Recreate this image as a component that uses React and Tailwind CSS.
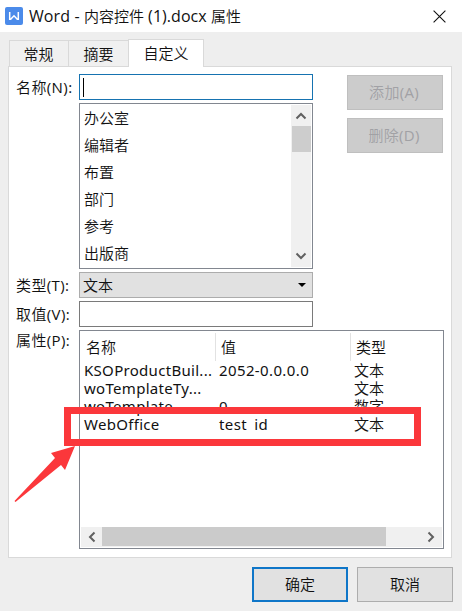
import { useState } from 'react';

const PRESETS = ['办公室', '编辑者', '布置', '部门', '参考', '出版商'];

const PROPERTIES = [
  { name: 'KSOProductBuil...', value: '2052-0.0.0.0', type: '文本' },
  { name: 'woTemplateTy...', value: '', type: '文本' },
  { name: 'woTemplate', value: '0', type: '数字' },
  { name: 'WebOffice', value: 'test id', type: '文本' },
];

const TABS = [
  { label: '常规', className: 'w-[59px] pr-px' },
  { label: '摘要', className: 'w-[60px]' },
];

const Chevron = ({ d, className }) => (
  <svg viewBox="0 0 12 12" className={className} fill="none" stroke="#606060" strokeWidth="2">
    <path d={d} />
  </svg>
);

const Label = ({ children, className = '' }) => (
  <span className={`w-[62px] shrink-0 tracking-[0.4px] mr-px ${className}`}>{children}</span>
);

const App = () => {
  const [name, setName] = useState('');

  return (
    <div className="relative flex h-[611px] w-[462px] flex-col overflow-hidden bg-[#eeeeee] font-['Open_Sans','Noto_Sans_CJK_SC_DemiLight','Noto_Sans_CJK_SC',sans-serif] text-[15px] leading-[20px] text-[#111]">
      {/* Title bar */}
      <header className="flex h-8 shrink-0 items-center bg-white pl-[5px] pr-[16px]">
        <svg viewBox="0 0 18 18" className="h-[18px] w-[18px]">
          <rect width="18" height="18" rx="2" fill="#4b8bea" />
          <path d="M4.7 5v7.2h1L9 8.8l3.3 3.4h1V5" fill="none" stroke="#fff" strokeWidth="1.5" />
        </svg>
        <h1 className="ml-[6px] whitespace-pre">
          <span className="text-[16px] tracking-[0.1px]">Word - </span>内容控件
          <span className="text-[16px] tracking-[0.05px]"> (1).docx </span>属性
        </h1>
        <svg viewBox="0 0 13 13" className="ml-auto h-[13px] w-[13px]" stroke="#111" strokeWidth="1.1">
          <path d="M.6.6l11.8 11.8M12.4.6L.6 12.4" />
        </svg>
      </header>

      {/* Tabs */}
      <nav className="z-10 flex h-[35px] shrink-0 items-end pl-[9px]">
        {TABS.map((tab) => (
          <button
            key={tab.label}
            className={`mb-px h-[26px] border-l border-t border-[#d9d9d9] bg-[#f0f0f0] ${tab.className}`}
          >
            {tab.label}
          </button>
        ))}
        <button className="h-[28px] w-[76px] border border-b-0 border-[#d9d9d9] bg-white pb-px">
          自定义
        </button>
      </nav>

      {/* Custom properties panel */}
      <main className="-mt-px ml-[8px] flex h-[492px] w-[444px] shrink-0 flex-col gap-[3px] border border-[#d9d9d9] bg-white pl-[7px] pt-[7px]">
        <div className="flex">
          <div className="flex flex-col gap-[3px]">
            <div className="flex h-[26px] items-center">
              <Label>名称(N):</Label>
              <div className="relative">
                <input
                  value={name}
                  onChange={(e) => setName(e.target.value)}
                  className="block h-[26px] w-[234px] border border-[#1673b1] bg-white px-1 outline-none"
                />
                <span className="absolute left-[4px] top-[4px] h-[19px] w-px bg-black" />
              </div>
            </div>

            <div className="ml-[63px] flex h-[166px] w-[234px] border border-[#828790] p-px">
              <ul className="flex-1 pl-[3px]">
                {PRESETS.map((item) => (
                  <li key={item} className="h-[27px] pt-[3px]">
                    {item}
                  </li>
                ))}
              </ul>
              <div className="flex w-[20px] flex-col items-center bg-[#f0f0f0]">
                <div className="flex h-[21px] items-center">
                  <Chevron d="M1.5 8.5L6 4l4.5 4.5" className="h-[12px] w-[12px]" />
                </div>
                <div className="h-[26px] w-[19px] bg-[#cdcdcd]" />
                <div className="mt-auto flex h-[22px] items-center">
                  <Chevron d="M1.5 3.5L6 8l4.5-4.5" className="h-[12px] w-[12px]" />
                </div>
              </div>
            </div>
          </div>

          <div className="ml-[34px] mt-px flex flex-col gap-[8px] tracking-[0.3px] text-[#a1a1a5]">
            <button className="h-[35px] w-[96px] border border-[#bfbfbf] bg-[#cccccc] pb-[2px] pr-[2px]">添加(A)</button>
            <button className="h-[35px] w-[96px] border border-[#bfbfbf] bg-[#cccccc] pb-[2px] pr-[2px]">删除(D)</button>
          </div>
        </div>

        <div className="flex h-[26px] items-center">
          <Label>类型(T):</Label>
          <div className="flex h-[26px] w-[234px] items-center justify-between border border-[#acacac] bg-[#e1e1e1] pl-[3px] pr-[6px]">
            文本
            <svg viewBox="0 0 8 4" className="h-[4px] w-[8px]">
              <path d="M0 0h8L4 4z" fill="#000" />
            </svg>
          </div>
        </div>

        <div className="flex h-[26px] items-center">
          <Label>取值(V):</Label>
          <input className="h-[26px] w-[234px] border border-[#7a7a7a] bg-white outline-none" />
        </div>

        <div className="flex">
          <Label>属性(P):</Label>
          <div className="flex h-[219px] w-[365px] flex-col border border-[#828790] px-px pb-px font-['Noto_Sans','Noto_Sans_CJK_SC_DemiLight','Noto_Sans_CJK_SC',sans-serif]">
            <div className="flex h-[30px] pt-[2px]">
              <span className="w-[135px] border-r border-[#e2e2e2] pl-[5px] pt-[4px]">名称</span>
              <span className="w-[135px] border-r border-[#e2e2e2] pl-[5px] pt-[4px]">值</span>
              <span className="pl-[5px] pt-[4px]">类型</span>
            </div>
            {PROPERTIES.map((row) => (
              <div key={row.name} className="flex h-[18px] whitespace-nowrap leading-[18px]">
                <span className="w-[135px] pl-[3px] tracking-[0.3px]">{row.name}</span>
                <span className="w-[135px] pl-[3px] tracking-[0.38px] [word-spacing:3px]">{row.value}</span>
                <span className="pl-[3px]">{row.type}</span>
              </div>
            ))}
            <div className="mt-auto flex h-[20px] items-center justify-between bg-[#f0f0f0]">
              <div className="flex w-[21px] justify-center">
                <Chevron d="M8.5 1.5L4 6l4.5 4.5" className="h-[12px] w-[12px]" />
              </div>
              <div className="mr-auto h-[19px] w-[284px] self-start bg-[#cbcbcb]" />
              <div className="flex w-[22px] justify-center">
                <Chevron d="M3.5 1.5L8 6l-4.5 4.5" className="h-[12px] w-[12px]" />
              </div>
            </div>
          </div>
        </div>
      </main>

      <footer className="flex justify-end gap-[9px] pr-[9px] pt-[9px]">
        <button className="h-[35px] w-[96px] border-2 border-[#0f76c8] bg-[#e1e1e1] pb-px">确定</button>
        <button className="h-[35px] w-[96px] border border-[#adadad] bg-[#e1e1e1] pb-px">取消</button>
      </footer>

      {/* Callout over the highlighted row */}
      <div className="absolute left-[64px] top-[407px] z-20 h-[39px] w-[357px] border-[7px] border-[#fb373b]" />
      <svg viewBox="0 0 62 57" className="absolute left-[14px] top-[445px] z-20 h-[57px] w-[62px]">
        <path d="M61 1L37 8l4 5L.5 56l1 1L47 20l4 5z" fill="#fb373b" />
      </svg>
    </div>
  );
};

export default App;
